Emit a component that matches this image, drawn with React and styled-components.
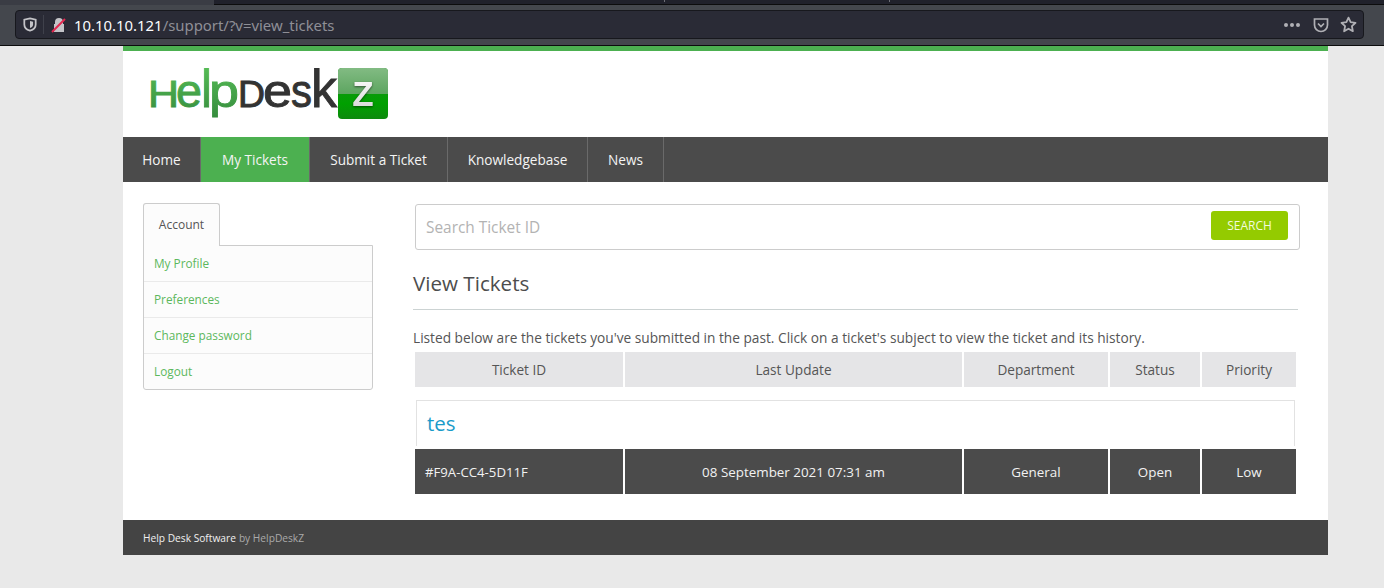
import styled, { createGlobalStyle } from "styled-components"

const GlobalStyle = createGlobalStyle`
  html, body { margin: 0; padding: 0; background: #e9e9e9; }
  body { font-family: "Open Sans", "Noto Sans", sans-serif; color: #555; }
`

const Chrome = styled.div`
  height: 46px;
  box-sizing: border-box;
  background: #44474d;
  border-bottom: 1px solid #0c0c0d;
`
const TabStrip = styled.div`
  height: 5px;
  box-sizing: border-box;
  background: #3a3c44;
  padding-left: 214px;
`
const TabEdge = styled.div`
  height: 5px;
  box-sizing: border-box;
  background: #20212b;
  border-bottom: 1px solid #0c0c0d;
  position: relative;
`
const TabTick = styled.span`
  position: absolute;
  left: ${p => p.$x}px;
  top: 0;
  width: 1px;
  height: 2px;
  background: #6d6e76;
`
const UrlRow = styled.div`
  display: flex;
  padding: 5px 20px 0 15px;
`
const UrlBar = styled.div`
  flex: 1;
  height: 29px;
  box-sizing: border-box;
  background: #2a2b36;
  border: 1px solid #17181d;
  border-radius: 4px;
  display: flex;
  align-items: center;
  padding: 0 6px 0 7px;
  color: #fbfbfe;
  font-family: "Noto Sans", sans-serif;
  font-size: 14.9px;
`
const Divider = styled.span`
  width: 1px;
  height: 19px;
  background: #3f414b;
  margin: 0 7px 0 6px;
`
const Host = styled.span`
  margin-left: 7px;
`
const Path = styled.span`
  color: #8f8f96;
`
const Spacer = styled.span`
  flex: 1;
`
const ChromeIcon = styled.svg`
  display: block;
  flex: none;
  margin-left: ${p => p.$gap || 0}px;
`

const Page = styled.div`
  width: 1205px;
  margin-left: 123px;
  background: #fff;
  border-top: 5px solid #4cb050;
`
const Header = styled.header`
  height: 86px;
  padding: 17px 0 0 25px;
  box-sizing: border-box;
`
const LogoSvg = styled.svg`
  display: block;
`
const LogoZ = styled.text`
  filter: drop-shadow(0 1px 1px rgba(0, 0, 0, 0.5));
`
const Nav = styled.nav`
  height: 45px;
  display: flex;
  background: #4b4b4b;
`
const NavItem = styled.a`
  width: ${p => p.$w}px;
  box-sizing: border-box;
  display: flex;
  align-items: center;
  justify-content: center;
  padding-bottom: 1px;
  border-right: 1px solid #6a6a6a;
  color: #f4f4f4;
  font-size: 13.6px;
  background: ${p => (p.$active ? "#4cb050" : "transparent")};
`
const Content = styled.main`
  display: flex;
  gap: 40px;
  padding: 21px 28px 26px 20px;
`
const Sidebar = styled.aside`
  width: 230px;
  flex: none;
`
const Tab = styled.div`
  width: 77px;
  height: 43px;
  box-sizing: border-box;
  padding-bottom: 2px;
  border: 1px solid #ccc;
  border-bottom: 0;
  border-radius: 3px 3px 0 0;
  background: #fcfcfc;
  display: flex;
  align-items: center;
  justify-content: center;
  font-size: 12px;
  color: #555;
  position: relative;
  z-index: 1;
  margin-bottom: -1px;
`
const Menu = styled.ul`
  list-style: none;
  margin: 0;
  padding: 0;
  border: 1px solid #ccc;
  border-radius: 0 0 3px 3px;
  background: #fcfcfc;
`
const MenuItem = styled.li`
  height: 35px;
  box-sizing: border-box;
  display: flex;
  align-items: center;
  padding: 0 0 1px 10px;
  font-size: 11.8px;
  color: #5cb85c;
  & + & {
    height: 36px;
    padding-bottom: 2px;
    border-top: 1px solid #eaeaea;
  }
`
const Main = styled.section`
  flex: 1;
  min-width: 0;
`
const SearchBox = styled.div`
  margin: 1px 0 0 2px;
  height: 46px;
  box-sizing: border-box;
  border: 1px solid #ccc;
  border-radius: 3px;
  display: flex;
  align-items: center;
  justify-content: space-between;
  padding: 0 11px 0 10px;
  color: #b3b3b3;
  font-size: 15.4px;
`
const SearchButton = styled.button`
  width: 77px;
  height: 29px;
  align-self: flex-start;
  margin-top: 6px;
  border: 0;
  border-radius: 3px;
  background: #94cb00;
  color: #f3fbdc;
  font: 12px "Open Sans", sans-serif;
  padding: 0;
`
const Title = styled.h2`
  margin: 18px 2px 0 0;
  padding-bottom: 11px;
  border-bottom: 1px solid #ccd3d3;
  font-size: 20.6px;
  font-weight: 400;
  line-height: 30px;
  color: #4d4d4d;
`
const Intro = styled.p`
  margin: 18px 0 0;
  font-size: 13.7px;
  line-height: 20px;
  color: #555;
`
const Tickets = styled.div`
  margin: 4px 0 0 2px;
  width: 881px;
`
const TicketRow = styled.div`
  display: grid;
  grid-template-columns: 208px 337px 144px 90px 94px;
  gap: 2px;
`
const HeadCell = styled.div`
  height: 35px;
  background: #e5e5e7;
  display: flex;
  align-items: center;
  justify-content: center;
  font-size: 13.6px;
  color: #555;
`
const Subject = styled.div`
  margin: 13px 1px 3px 1px;
  height: 46px;
  box-sizing: border-box;
  border: 1px solid #e2e2e2;
  border-bottom: 0;
  padding: 0 0 2px 10px;
  display: flex;
  align-items: center;
  color: #1a9bc9;
  font-size: 20.5px;
`
const DataCell = styled.div`
  height: 45px;
  background: #4b4b4b;
  display: flex;
  align-items: center;
  justify-content: ${p => (p.$left ? "flex-start" : "center")};
  padding-left: ${p => (p.$left ? "10px" : "0")};
  font-size: ${p => (p.$left ? "13.2px" : "13.4px")};
  color: #f2f2f2;
`
const Footer = styled.footer`
  height: 35px;
  background: #444;
  display: flex;
  align-items: center;
  padding-left: 20px;
  font-size: 10.2px;
  color: #f0f0f0;
`
const FooterMuted = styled.span`
  color: #aaa;
  margin-left: 3px;
`

// logo letters: [char, x, width, font size]
const helpLetters = [["H", 0, 31, 36], ["e", 28, 26, 47], ["l", 53, 11, 55], ["p", 61, 30, 47]]
const deskLetters = [["D", 90, 27, 36], ["e", 115, 29, 47], ["s", 143, 21, 47], ["k", 163, 26, 54]]

function LogoWord({ letters, fill }) {
  return (
    <text y="39" fill={fill} stroke={fill} strokeWidth="0.9" fontFamily="'Liberation Sans', sans-serif">
      {letters.map(([ch, x, w, size]) => (
        <tspan key={x} x={x} fontSize={size} textLength={w} lengthAdjust="spacingAndGlyphs">{ch}</tspan>
      ))}
    </text>
  )
}

function Logo() {
  return (
    <LogoSvg width="242" height="53" viewBox="0 0 242 53">
      <defs>
        <linearGradient id="helpGrad" gradientUnits="userSpaceOnUse" x1="0" y1="0" x2="0" y2="52">
          <stop offset="0" stopColor="#55bb55" />
          <stop offset="1" stopColor="#348a3c" />
        </linearGradient>
        <linearGradient id="boxTop" x1="0" y1="0" x2="0" y2="1">
          <stop offset="0" stopColor="#82bb83" />
          <stop offset="1" stopColor="#5da560" />
        </linearGradient>
        <linearGradient id="boxBottom" x1="0" y1="0" x2="0" y2="1">
          <stop offset="0" stopColor="#1f8f1f" />
          <stop offset="0.7" stopColor="#00a000" />
          <stop offset="1" stopColor="#0d8a0d" />
        </linearGradient>
        <linearGradient id="zGrad" x1="0" y1="0" x2="0" y2="1">
          <stop offset="0" stopColor="#ffffff" />
          <stop offset="1" stopColor="#d4d4d4" />
        </linearGradient>
      </defs>
      <LogoWord letters={helpLetters} fill="url(#helpGrad)" />
      <LogoWord letters={deskLetters} fill="#333" />
      <rect x="190" y="0" width="50" height="51" rx="4" fill="url(#boxBottom)" />
      <path d="M190 4a4 4 0 0 1 4-4h42a4 4 0 0 1 4 4v22h-50z" fill="url(#boxTop)" />
      <LogoZ x="215" y="37.500" fontSize="35" fontWeight="700" textAnchor="middle" fill="url(#zGrad)" fontFamily="'Liberation Sans', sans-serif">Z</LogoZ>
    </LogoSvg>
  )
}

const tabs = [["Home", 78], ["My Tickets", 109, true], ["Submit a Ticket", 138], ["Knowledgebase", 140], ["News", 76]]
const links = ["My Profile", "Preferences", "Change password", "Logout"]
const heads = ["Ticket ID", "Last Update", "Department", "Status", "Priority"]
const cells = ["08 September 2021 07:31 am", "General", "Open", "Low"]

export default function App() {
  return (
    <>
      <GlobalStyle />
      <Chrome>
        <TabStrip>
          <TabEdge>
            <TabTick $x={450} />
            <TabTick $x={675} />
          </TabEdge>
        </TabStrip>
        <UrlRow>
          <UrlBar>
            <ChromeIcon width="14" height="15" viewBox="0 0 16 17" fill="none" stroke="#c4c4c8" strokeWidth="2">
              <path d="M8 1.500l6.500 1.500v5.500c0 3.500-2.500 6-6.500 7-4-1-6.500-3.500-6.500-7V3z" />
              <path d="M8 4.500l3.500.8v3.200c0 2-1.500 3.300-3.500 4z" fill="#c4c4c8" stroke="none" />
            </ChromeIcon>
            <Divider />
            <ChromeIcon width="16" height="16" viewBox="0 0 16 16">
              <path d="M4 7V5a4 4 0 0 1 8 0v2h1v8H3V7z" fill="#c4c4c8" />
              <path d="M1 15L14 2" stroke="#e22850" strokeWidth="2" />
            </ChromeIcon>
            <Host>10.10.10.121</Host>
            <Path>/support/?v=view_tickets</Path>
            <Spacer />
            <ChromeIcon width="16" height="4" viewBox="0 0 16 4" fill="#b0b0b5">
              <circle cx="2" cy="2" r="2" />
              <circle cx="8" cy="2" r="2" />
              <circle cx="14" cy="2" r="2" />
            </ChromeIcon>
            <ChromeIcon width="16" height="16" viewBox="0 0 16 16" fill="none" stroke="#b0b0b5" strokeWidth="1.700" $gap="13">
              <path d="M1.500 2h13v6a6.500 6.500 0 0 1-13 0z" />
              <path d="M5 6.500l3 3 3-3" />
            </ChromeIcon>
            <ChromeIcon width="17" height="17" viewBox="0 0 16 16" fill="none" stroke="#b0b0b5" strokeWidth="1.700" strokeLinejoin="round" $gap="11">
              <path d="M8 1.500l2 4.300 4.600.6-3.400 3.200.9 4.700L8 12l-4.100 2.300.9-4.700L1.400 6.400 6 5.800z" />
            </ChromeIcon>
          </UrlBar>
        </UrlRow>
      </Chrome>
      <Page>
        <Header>
          <Logo />
        </Header>
        <Nav>
          {tabs.map(([label, w, active]) => (
            <NavItem key={label} $w={w} $active={active}>{label}</NavItem>
          ))}
        </Nav>
        <Content>
          <Sidebar>
            <Tab>Account</Tab>
            <Menu>
              {links.map(l => <MenuItem key={l}>{l}</MenuItem>)}
            </Menu>
          </Sidebar>
          <Main>
            <SearchBox>
              Search Ticket ID
              <SearchButton>SEARCH</SearchButton>
            </SearchBox>
            <Title>View Tickets</Title>
            <Intro>Listed below are the tickets you've submitted in the past. Click on a ticket's subject to view the ticket and its history.</Intro>
            <Tickets>
              <TicketRow>
                {heads.map(h => <HeadCell key={h}>{h}</HeadCell>)}
              </TicketRow>
              <Subject>tes</Subject>
              <TicketRow>
                <DataCell $left>#F9A-CC4-5D11F</DataCell>
                {cells.map(c => <DataCell key={c}>{c}</DataCell>)}
              </TicketRow>
            </Tickets>
          </Main>
        </Content>
        <Footer>
          Help Desk Software <FooterMuted>by HelpDeskZ</FooterMuted>
        </Footer>
      </Page>
    </>
  )
}
